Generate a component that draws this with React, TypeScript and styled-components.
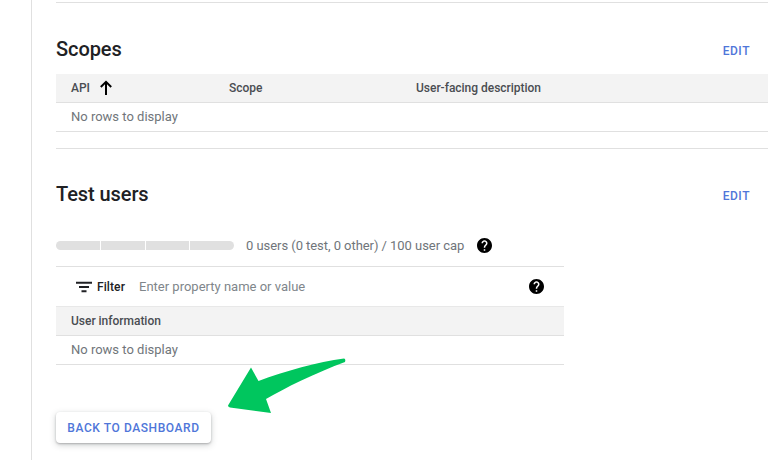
import React from 'react';
import styled, { createGlobalStyle } from 'styled-components';

const GlobalStyle = createGlobalStyle`
  html, body {
    margin: 0;
    padding: 0;
    background: #fff;
    overflow: hidden;
  }
  body {
    font-family: Roboto, 'Liberation Sans', sans-serif;
    color: #202124;
  }
`;

const Page = styled.div`
  position: relative;
  display: flex;
  width: 768px;
  height: 460px;
  overflow: hidden;
`;

const Rail = styled.div`
  flex: none;
  width: 31px;
  border-right: 1px solid #e0e0e0;
`;

const Main = styled.main`
  flex: 1;
  min-width: 0;
  padding: 2px 0 0 24px;
  display: flex;
  flex-direction: column;
`;

const Rule = styled.div<{ $gap?: number }>`
  height: 1px;
  background: #e0e0e0;
  margin-top: ${(p) => p.$gap ?? 0}px;
`;

const SectionHead = styled.div<{ $top: number; $height: number }>`
  display: flex;
  align-items: center;
  justify-content: space-between;
  margin-top: ${(p) => p.$top}px;
  height: ${(p) => p.$height}px;
`;

const Title = styled.h2`
  margin: 0;
  font-size: 20px;
  font-weight: 500;
  line-height: 28px;
  letter-spacing: -0.08px;
  color: #202124;
`;

const EditLink = styled.a`
  margin: 3px 18px 0 0;
  font-size: 12px;
  font-weight: 500;
  letter-spacing: 0.55px;
  color: #4f76d9;
`;

const HeadRow = styled.div<{ $narrow?: boolean; $top?: number }>`
  display: flex;
  align-items: center;
  flex: none;
  box-sizing: border-box;
  height: 29px;
  margin-top: ${(p) => p.$top ?? 0}px;
  padding-left: 15px;
  background: #f3f3f3;
  border-bottom: 1px solid #e0e0e0;
  width: ${(p) => (p.$narrow ? '508px' : 'auto')};
`;

const HeadCell = styled.div<{ $width?: number }>`
  display: flex;
  align-items: center;
  gap: 8px;
  width: ${(p) => (p.$width ? `${p.$width}px` : 'auto')};
  font-size: 12px;
  font-weight: 500;
  letter-spacing: -0.02px;
  color: #4a4d52;
`;

const EmptyRow = styled.div<{ $narrow?: boolean }>`
  display: flex;
  align-items: center;
  flex: none;
  box-sizing: border-box;
  height: 29px;
  padding: 0 0 1px 15px;
  font-size: 13px;
  color: #70757a;
  border-bottom: 1px solid #e0e0e0;
  width: ${(p) => (p.$narrow ? '508px' : 'auto')};
`;

const CapRow = styled.div`
  display: flex;
  align-items: center;
  margin-top: 24px;
  height: 20px;
`;

const CapBar = styled.div`
  display: flex;
  gap: 1px;
  width: 178px;
  height: 9px;
  border-radius: 5px;
  overflow: hidden;
`;

const CapSegment = styled.span`
  flex: 1;
  background: #e0e0e0;
`;

const CapText = styled.span`
  margin-left: 12px;
  font-size: 13px;
  letter-spacing: -0.05px;
  color: #70757a;
`;

const HelpIcon = styled.svg`
  flex: none;
  width: 15px;
  height: 15px;
  fill: #000;
`;

const CapHelp = styled.span`
  display: flex;
  margin-left: 13px;
`;

const FilterBar = styled.div`
  display: flex;
  align-items: center;
  flex: none;
  box-sizing: border-box;
  width: 508px;
  height: 41px;
  margin-top: 11px;
  padding-left: 20px;
  border-top: 1px solid #e0e0e0;
  border-bottom: 1px solid #e8e8e8;
`;

const FilterLabel = styled.span`
  display: flex;
  align-items: center;
  gap: 5px;
  font-size: 12px;
  font-weight: 500;
  letter-spacing: 0.1px;
  color: #202124;
`;

const FilterHint = styled.span`
  flex: 1;
  margin-left: 14px;
  font-size: 13px;
  color: #80868b;
`;

const FilterHelp = styled.span`
  display: flex;
  margin-right: 20px;
`;

const BackButton = styled.button`
  align-self: flex-start;
  flex: none;
  margin-top: 47px;
  width: 155px;
  height: 31px;
  padding: 0;
  border: 0;
  border-radius: 4px;
  background: #fff;
  font-family: inherit;
  font-size: 12px;
  font-weight: 500;
  letter-spacing: 0.58px;
  color: #4f76d9;
  box-shadow: 0 1px 2px rgba(60, 64, 67, 0.3), 0 2px 6px rgba(60, 64, 67, 0.25);
`;

const Callout = styled.svg`
  position: absolute;
  left: 0;
  top: 0;
  width: 768px;
  height: 460px;
  pointer-events: none;
`;

const Help = () => (
  <HelpIcon viewBox="2 2 20 20">
    <path d="M12 2C6.48 2 2 6.48 2 12s4.48 10 10 10 10-4.48 10-10S17.52 2 12 2zm1 17h-2v-2h2v2zm2.07-7.75-.9.92C13.45 12.9 13 13.5 13 15h-2v-.5c0-1.1.45-2.1 1.17-2.83l1.24-1.26c.37-.36.59-.86.59-1.41 0-1.1-.9-2-2-2s-2 .9-2 2H8c0-2.21 1.79-4 4-4s4 1.79 4 4c0 .88-.36 1.68-.93 2.25z" />
  </HelpIcon>
);

const App = () => (
  <Page>
    <GlobalStyle />
    <Rail />
    <Main>
      <Rule />
      <SectionHead $top={29} $height={34}>
        <Title>Scopes</Title>
        <EditLink>EDIT</EditLink>
      </SectionHead>
      <HeadRow $top={8}>
        <HeadCell $width={158}>
          API
          <svg width="16" height="16" viewBox="0 0 16 16" fill="none" stroke="#000" strokeWidth="2">
            <path d="M8 15V2M2.8 7 8 1.8 13.2 7" />
          </svg>
        </HeadCell>
        <HeadCell $width={187}>Scope</HeadCell>
        <HeadCell>User-facing description</HeadCell>
      </HeadRow>
      <EmptyRow>No rows to display</EmptyRow>
      <Rule $gap={16} />
      <SectionHead $top={28} $height={34}>
        <Title>Test users</Title>
        <EditLink>EDIT</EditLink>
      </SectionHead>
      <CapRow>
        <CapBar>
          <CapSegment />
          <CapSegment />
          <CapSegment />
          <CapSegment />
        </CapBar>
        <CapText>0 users (0 test, 0 other) / 100 user cap</CapText>
        <CapHelp>
          <Help />
        </CapHelp>
      </CapRow>
      <FilterBar>
        <FilterLabel>
          <svg width="16" height="12" viewBox="0 0 16 12" fill="#202124">
            <path d="M0 .8h16v2H0zM3 5h10v2H3zM5.5 9.2h5v2h-5z" />
          </svg>
          Filter
        </FilterLabel>
        <FilterHint>Enter property name or value</FilterHint>
        <FilterHelp>
          <Help />
        </FilterHelp>
      </FilterBar>
      <HeadRow $narrow>
        <HeadCell>User information</HeadCell>
      </HeadRow>
      <EmptyRow $narrow>No rows to display</EmptyRow>
      <BackButton>BACK TO DASHBOARD</BackButton>
    </Main>
    <Callout viewBox="0 0 768 460">
      <path
        d="M344 358.5C318 362 285 371 258.5 381L251 367.5 228 405.5Q228 407 230 407.5L271 413 266 399C285 388 315 373 345 362Q346 359 344 358.5Z"
        fill="#00c65e"
      />
    </Callout>
  </Page>
);

export default App;
